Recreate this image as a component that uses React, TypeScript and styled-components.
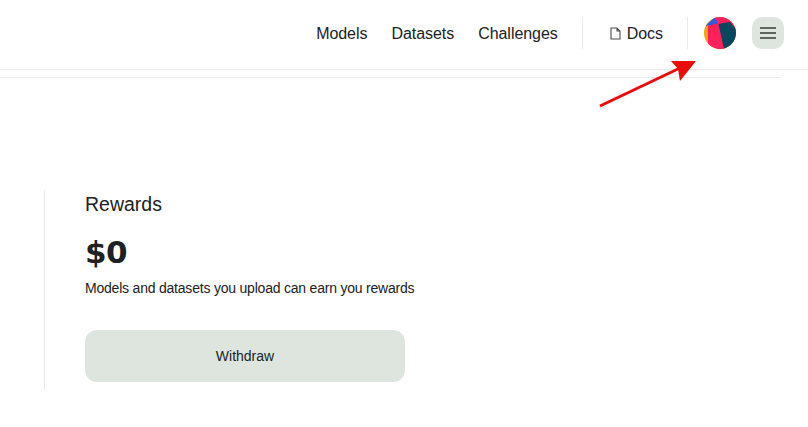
import React from "react";
import styled, { createGlobalStyle } from "styled-components";

const Global = createGlobalStyle`
  html, body { margin: 0; padding: 0; background: #fff; }
  body { font-family: "Liberation Sans", Arial, sans-serif; color: #202124; overflow: hidden; }
`;

const Page = styled.div`
  position: relative;
  width: 808px;
  height: 427px;
  overflow: hidden;
`;

const Header = styled.header`
  box-sizing: border-box;
  height: 70px;
  border-bottom: 1px solid #ebebeb;
  display: flex;
  align-items: center;
  justify-content: flex-end;
  padding: 0 24px 3px 0;
`;

const NavLinks = styled.nav`
  display: flex;
  align-items: center;
  gap: 24px;
`;

const NavLink = styled.a`
  box-sizing: border-box;
  height: 32px;
  padding-top: 1px;
  font-size: 16px;
  line-height: 31px;
  letter-spacing: -0.05px;
  color: #202124;
  display: flex;
  align-items: center;
  gap: 6px;
`;

const Divider = styled.div<{ $left: number; $right: number }>`
  width: 1px;
  height: 32px;
  background: #e8ebe8;
  margin: ${(p) => `0 ${p.$right}px 0 ${p.$left}px`};
`;

const Avatar = styled.svg`
  width: 32px;
  height: 32px;
  display: block;
  margin-right: 16px;
`;

const MenuButton = styled.button`
  width: 32px;
  height: 32px;
  border: 0;
  padding: 0;
  border-radius: 10px;
  background: #dee5df;
  display: flex;
  align-items: center;
  justify-content: center;
`;

const SubRule = styled.div`
  width: 781px;
  height: 1px;
  margin-top: 7px;
  background: #ebebeb;
`;

const Panel = styled.section`
  box-sizing: border-box;
  width: 400px;
  height: 200px;
  margin: 112px 0 0 44px;
  padding: 0 0 0 40px;
  border-left: 1px solid #e9e9e9;
`;

const Title = styled.h2`
  margin: 0;
  font-size: 19.5px;
  line-height: 28px;
  font-weight: 400;
`;

const Amount = styled.div`
  margin-top: 14px;
  font-family: "DejaVu Sans", "Liberation Sans", sans-serif;
  font-size: 31px;
  line-height: 40px;
  font-weight: 700;
  letter-spacing: -0.5px;
`;

const Description = styled.p`
  margin: 6px 0 0;
  font-size: 14px;
  line-height: 20px;
  letter-spacing: -0.21px;
`;

const Withdraw = styled.button`
  display: block;
  width: 320px;
  height: 52px;
  margin-top: 32px;
  border: 0;
  border-radius: 12px;
  background: #dee5df;
  color: #202124;
  font-family: inherit;
  font-size: 14px;
`;

const Arrow = styled.svg`
  position: absolute;
  left: 590px;
  top: 50px;
  width: 120px;
  height: 65px;
`;

export default function App() {
  return (
    <Page>
      <Global />
      <Header>
        <NavLinks>
          <NavLink>Models</NavLink>
          <NavLink>Datasets</NavLink>
          <NavLink>Challenges</NavLink>
        </NavLinks>
        <Divider $left={24} $right={27} />
        <NavLink>
          <svg width="11" height="13" viewBox="0 0 11 13" fill="none" stroke="#4a4d4a" strokeWidth="1.1">
            <path d="M1 1 h6 l3 3 v8 h-9 z M7 1 v3 h3" />
          </svg>
          Docs
        </NavLink>
        <Divider $left={24} $right={16} />
        <Avatar viewBox="0 0 32 32">
          <defs>
            <clipPath id="disc"><circle cx="16" cy="16" r="16" /></clipPath>
          </defs>
          <g clipPath="url(#disc)">
            <rect width="32" height="32" fill="#f2a20c" />
            <path d="M11 0 H32 V14 L15 7 L4 9 Z" fill="#ff1f5a" />
            <path d="M1 9 L11 0 L14 7 Z" fill="#2e5be0" />
            <path d="M4 9 L15 6 L21 32 H4 Z" fill="#ff1f5a" />
            <path d="M14.5 7 L26 5 L32 12 V32 H20 Z" fill="#07485e" />
          </g>
        </Avatar>
        <MenuButton aria-label="Menu">
          <svg width="16" height="12" viewBox="0 0 16 12" fill="#5f6661">
            <rect y="0" width="16" height="2" />
            <rect y="5" width="16" height="2" />
            <rect y="10" width="16" height="2" />
          </svg>
        </MenuButton>
      </Header>
      <SubRule />
      <Panel>
        <Title>Rewards</Title>
        <Amount>$0</Amount>
        <Description>Models and datasets you upload can earn you rewards</Description>
        <Withdraw>Withdraw</Withdraw>
      </Panel>
      <Arrow viewBox="0 0 120 65">
        <path d="M10 56 L90 18" stroke="#ee0a0a" strokeWidth="3" fill="none" />
        <path d="M106 11 L81 11 L88 19 L90 31 Z" fill="#ee0a0a" />
      </Arrow>
    </Page>
  );
}
